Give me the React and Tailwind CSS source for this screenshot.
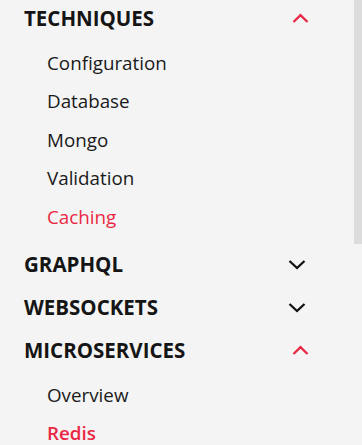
const sections = [
  {
    title: "Techniques",
    open: true,
    items: [
      { label: "Configuration" },
      { label: "Database" },
      { label: "Mongo" },
      { label: "Validation" },
      { label: "Caching", active: true },
    ],
  },
  { title: "GraphQL", open: false, items: [] },
  { title: "Websockets", open: false, items: [] },
  {
    title: "Microservices",
    open: true,
    items: [{ label: "Overview" }, { label: "Redis", active: true, bold: true }],
  },
];

const Chevron = ({ open }) =>
  open ? (
    <svg width="17" height="11" viewBox="0 0 17 11" className="mr-[45px]">
      <path d="M1.5 9 L8.5 2.2 L15.5 9" fill="none" stroke="#ea2845" strokeWidth="2.3" />
    </svg>
  ) : (
    <svg width="18" height="11" viewBox="0 0 18 11" className="mr-[48px]">
      <path d="M1.5 2 L9 9 L16.5 2" fill="none" stroke="#111111" strokeWidth="2.3" />
    </svg>
  );

function Section({ title, open, items }) {
  return (
    <div>
      <div className="flex h-[43px] items-center justify-between pl-[24px]">
        <span className="text-[20.5px] font-bold uppercase text-[#151515]">
          {title}
        </span>
        <Chevron open={open} />
      </div>
      {open && (
        <ul className="pt-[4px] pb-[6.5px]">
          {items.map((item) => (
            <li
              key={item.label}
              className={`flex h-[38.5px] items-center pl-[47px] text-[18.8px] ${
                item.active ? "text-[#ea2845]" : "text-[#1a1a1a]"
              } ${item.bold ? "font-semibold" : ""}`}
            >
              {item.label}
            </li>
          ))}
        </ul>
      )}
    </div>
  );
}

export default function App() {
  return (
    <div
      className="flex h-[445px] w-[362px] overflow-hidden bg-[#f4f4f4]"
      style={{ fontFamily: '"Open Sans", "Noto Sans", sans-serif' }}
    >
      <div className="-mt-[3.5px] flex-1">
        {sections.map((s) => (
          <Section key={s.title} {...s} />
        ))}
      </div>
      <div className="w-[8px]">
        <div className="h-[244px] bg-[#dcdcdc]" />
      </div>
    </div>
  );
}
